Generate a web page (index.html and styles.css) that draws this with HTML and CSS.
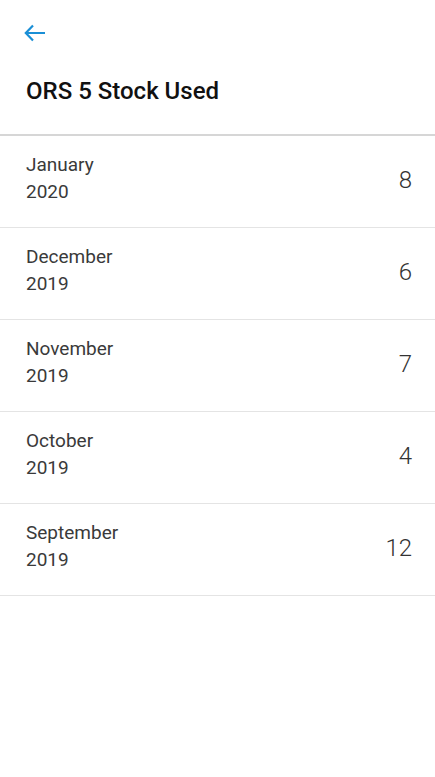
FILE: index.html
```html
<!DOCTYPE html>
<html>
<head>
<meta charset="utf-8">
<title>ORS 5 Stock Used</title>
<link rel="stylesheet" href="styles.css">
</head>
<body>
	<!-- header -->
	<div class="header">
		<div class="back">
			<svg width="22" height="18" viewBox="0 0 22 18">
				<path d="M21 9H2M9 1.5L1.8 9 9 16.5" fill="none" stroke="#1a8fd6" stroke-width="2.2"/>
			</svg>
		</div>
		<h1 class="title">ORS 5 Stock Used</h1>
	</div>
	<!-- months list -->
	<div class="list">
		<div class="row">
			<div class="month">January<br>2020</div>
			<div class="count">8</div>
		</div>
		<div class="row">
			<div class="month">December<br>2019</div>
			<div class="count">6</div>
		</div>
		<div class="row">
			<div class="month">November<br>2019</div>
			<div class="count">7</div>
		</div>
		<div class="row">
			<div class="month">October<br>2019</div>
			<div class="count">4</div>
		</div>
		<div class="row">
			<div class="month">September<br>2019</div>
			<div class="count">12</div>
		</div>
	</div>
</body>
</html>
```

FILE: styles.css
```css
body {
	margin: 0;
	background: #fff;
	font-family: Roboto, "Liberation Sans", sans-serif;
}
.header {
	padding: 24px 25px 0 24px;
	height: 110px;
	border-bottom: 2px solid #d6d6d6;
}
.back {
	height: 18px;
	display: flex;
	align-items: center;
}
.back svg { display: block; }
.title {
	margin: 35px 0 0 2px;
	font-size: 24px;
	font-weight: 500;
	color: #111;
	line-height: 28px;
}
.row {
	display: flex;
	align-items: center;
	justify-content: space-between;
	height: 91px;
	padding: 0 23px 0 26px;
	border-bottom: 1px solid #e4e4e4;
}
.month {
	font-size: 19px;
	line-height: 27px;
	color: #3a3a3a;
	padding-bottom: 8px;
}
.count {
	font-size: 24px;
	font-weight: 300;
	color: #333;
	padding-bottom: 3px;
}
```
